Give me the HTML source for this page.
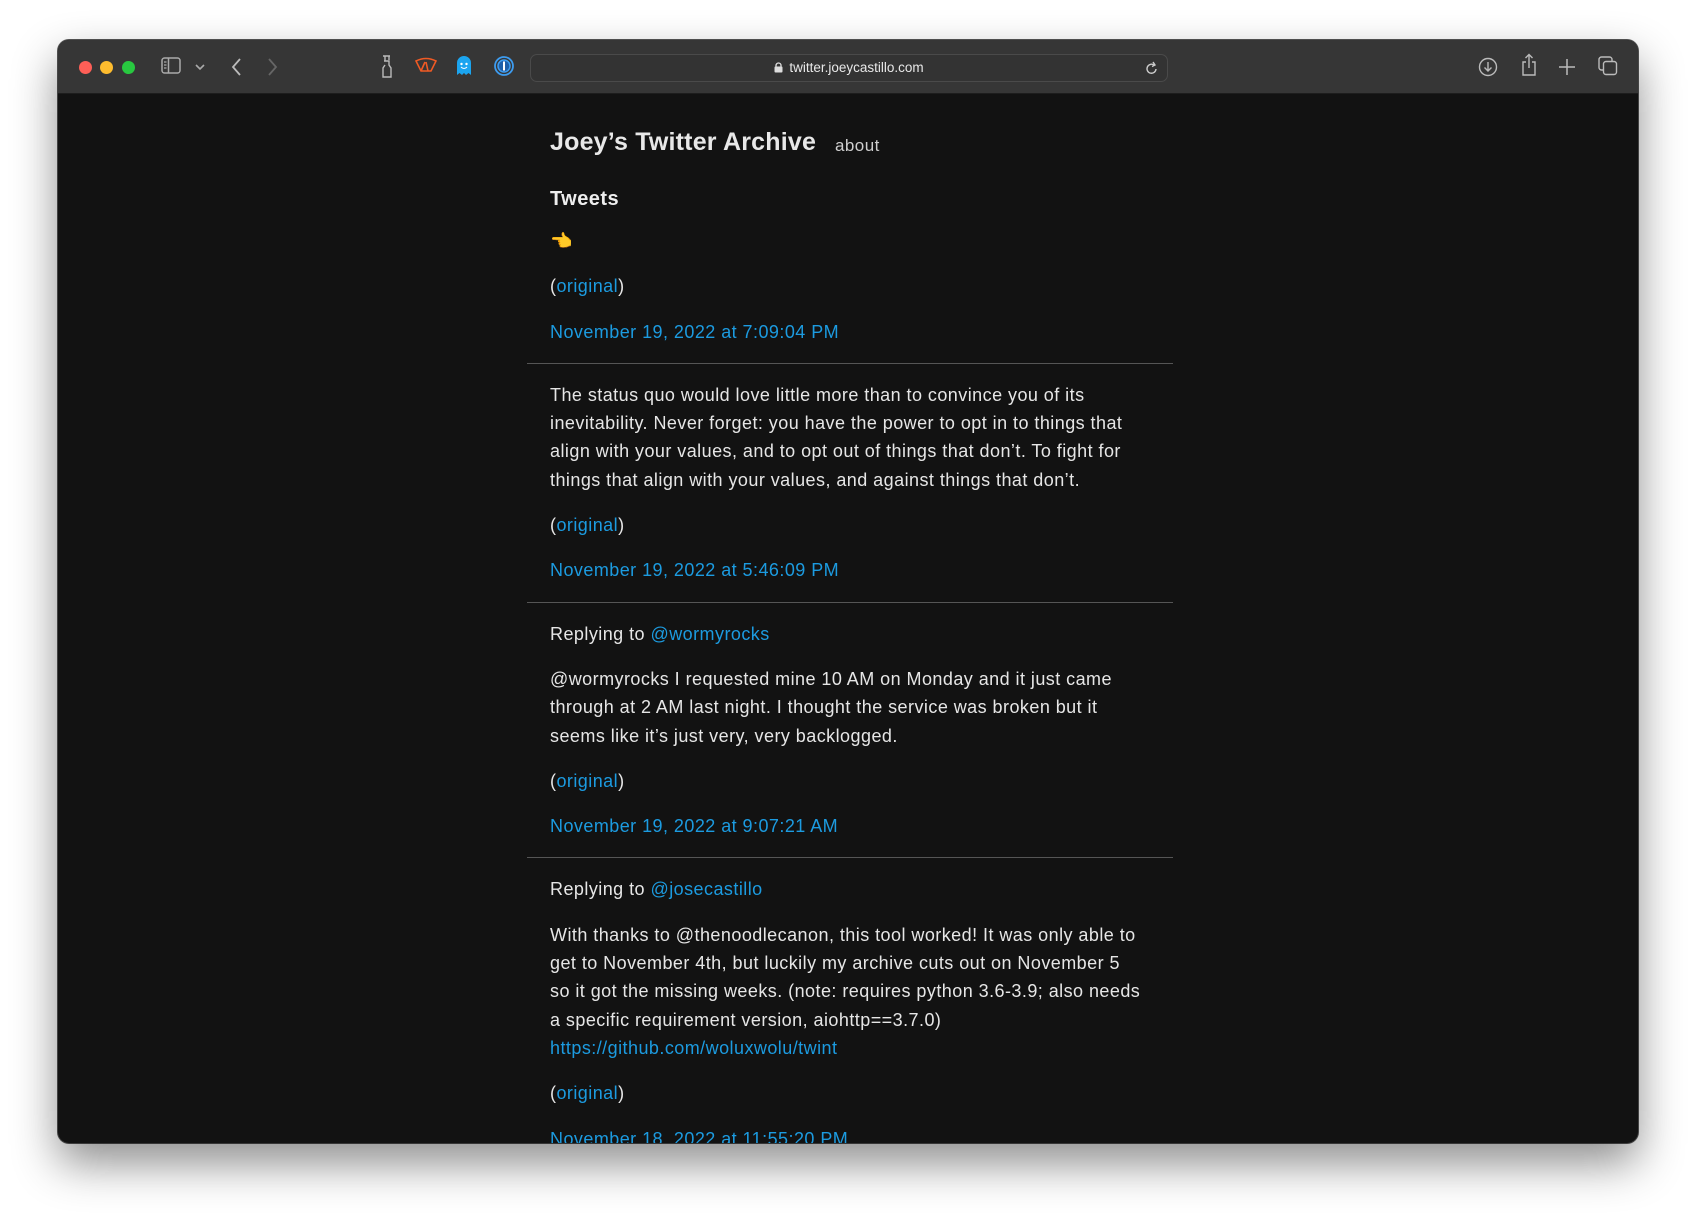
<!DOCTYPE html>
<html><head><meta charset="utf-8"><style>
*{box-sizing:border-box;margin:0;padding:0}
html,body{width:1697px;height:1222px;background:#fff;overflow:hidden;font-family:"Liberation Sans","DejaVu Sans",sans-serif}
.win{position:absolute;left:58px;top:40px;width:1580px;height:1103px;border-radius:11px;background:#121212;overflow:hidden;box-shadow:0 20px 45px rgba(0,0,0,.45),0 0 0 1px #555}
.bar{position:absolute;left:0;top:0;width:100%;height:54px;background:#363636;border-bottom:1px solid #1d1d1d}
.dot{position:absolute;top:21px;width:13px;height:13px;border-radius:50%}
.ic{position:absolute}
.url{position:absolute;left:472px;top:14px;width:638px;height:28px;border-radius:7px;border:1px solid #4a4a4a;background:#333;color:#e8e8e8;font-size:13.5px;text-align:center;line-height:26px}
.content{position:absolute;left:469px;top:54px;width:646px;color:#e6e6e6;font-size:18px;letter-spacing:0.45px}
.hd{padding:0 23px;height:79px;position:relative}
.hd h1{position:absolute;left:23px;top:34px;font-size:25px;font-weight:bold;color:#e8e8e8;letter-spacing:0.2px}
.hd span{position:absolute;left:308px;top:42px;font-size:17px;color:#cfcfcf}
h2{font-size:20px;font-weight:bold;padding:0 23px;line-height:28px;color:#eee}
.art{padding:0 23px;border-bottom:1px solid #555}
.art p{line-height:28.3px;margin:17px 0}
a{color:#1c9be0;text-decoration:none}
</style></head><body>
<div class="win">
 <div class="bar">
  <div class="dot" style="left:21px;background:#fe5f57"></div>
  <div class="dot" style="left:42px;background:#febc2e"></div>
  <div class="dot" style="left:64px;background:#28c840"></div>
  <svg class="ic" style="left:103px;top:17px" width="20" height="18" viewBox="0 0 20 18"><rect x="1" y="1" width="18" height="15" rx="2.5" fill="none" stroke="#aaa" stroke-width="1.5"/><line x1="7.5" y1="1" x2="7.5" y2="16" stroke="#aaa" stroke-width="1.5"/><path d="M3 5h2.5M3 8h2.5M3 11h2.5" stroke="#aaa" stroke-width="1.2"/></svg>
  <svg class="ic" style="left:137px;top:23px" width="10" height="8"><path d="M1 2l4 4 4-4" fill="none" stroke="#aaa" stroke-width="1.6"/></svg>
  <svg class="ic" style="left:172px;top:17px" width="12" height="20"><path d="M10 2L3 10l7 8" fill="none" stroke="#bbb" stroke-width="1.8"/></svg>
  <svg class="ic" style="left:209px;top:17px" width="12" height="20"><path d="M2 2l7 8-7 8" fill="none" stroke="#666" stroke-width="1.8"/></svg>
  <svg class="ic" style="left:322px;top:14px" width="14" height="24"><path d="M3 2h7M5 2v5M9 2v4M4 7h5v4l2 3v9H3v-9l2-3" fill="none" stroke="#bbb" stroke-width="1.4"/></svg>
  <svg class="ic" style="left:357px;top:17px" width="22" height="18"><path d="M1 4q10-5 20 0l-5 10H6z M6 14l4-9M13 14l-2-9" fill="none" stroke="#f05a24" stroke-width="1.6"/></svg>
  <svg class="ic" style="left:398px;top:15px" width="16" height="22"><path d="M1 20V8a7 7 0 0 1 14 0v12l-2.5-2-2.5 2-2-2-2 2-2.5-2z" fill="#1ba5f0"/><circle cx="5.5" cy="9" r="1.2" fill="#fff"/><circle cx="10.5" cy="9" r="1.2" fill="#fff"/><path d="M5 12q3 3 6 0" stroke="#fff" fill="none"/></svg>
  <svg class="ic" style="left:436px;top:16px" width="20" height="20"><circle cx="10" cy="10" r="9" fill="none" stroke="#3d9cf0" stroke-width="1.8"/><circle cx="10" cy="10" r="6" fill="#1e5ea8" stroke="#3d9cf0" stroke-width="1.5"/><rect x="9" y="5.5" width="2" height="9" fill="#fff"/></svg>
  <div class="url"><svg width="9" height="11" style="vertical-align:-1px;margin-right:6px"><rect x="0.5" y="4.5" width="8" height="6" rx="1" fill="#ddd"/><path d="M2 5V3.5a2.5 2.5 0 0 1 5 0V5" fill="none" stroke="#ddd" stroke-width="1.3"/></svg>twitter.joeycastillo.com
   <svg style="position:absolute;right:8px;top:6px" width="14" height="16"><path d="M11 8a4.5 4.5 0 1 1-2-4" fill="none" stroke="#ccc" stroke-width="1.4"/><path d="M8 1l2 3-3 1.5" fill="none" stroke="#ccc" stroke-width="1.4"/></svg></div>
  <svg class="ic" style="left:1420px;top:17px" width="20" height="20"><circle cx="10" cy="10" r="8.5" fill="none" stroke="#bbb" stroke-width="1.4"/><path d="M10 5v9M6.5 10.5L10 14l3.5-3.5" fill="none" stroke="#bbb" stroke-width="1.4"/></svg>
  <svg class="ic" style="left:1462px;top:13px" width="18" height="24"><path d="M6 9H3v13h12V9h-3M9 15V2M5.5 5L9 1.5 12.5 5" fill="none" stroke="#bbb" stroke-width="1.4"/></svg>
  <svg class="ic" style="left:1500px;top:18px" width="18" height="18"><path d="M9 1v16M1 9h16" stroke="#bbb" stroke-width="1.5"/></svg>
  <svg class="ic" style="left:1540px;top:16px" width="20" height="20"><rect x="1" y="1" width="13" height="13" rx="2.5" fill="none" stroke="#bbb" stroke-width="1.4"/><rect x="5.5" y="5.5" width="13" height="13" rx="2.5" fill="#363636" stroke="#bbb" stroke-width="1.4"/></svg>
 </div>
 <div class="content">
  <div class="hd"><h1>Joey’s Twitter Archive</h1><span>about</span></div>
  <h2 style="margin-top:12px">Tweets</h2>
  <div class="art"><p style="margin-top:14px">👈</p><p>(<a>original</a>)</p><p><a>November 19, 2022 at 7:09:04 PM</a></p></div>
  <div class="art"><p>The status quo would love little more than to convince you of its inevitability. Never forget: you have the power to opt in to things that align with your values, and to opt out of things that don’t. To fight for things that align with your values, and against things that don’t.</p><p>(<a>original</a>)</p><p><a>November 19, 2022 at 5:46:09 PM</a></p></div>
  <div class="art"><p>Replying to <a>@wormyrocks</a></p><p>@wormyrocks I requested mine 10 AM on Monday and it just came through at 2 AM last night. I thought the service was broken but it seems like it’s just very, very backlogged.</p><p>(<a>original</a>)</p><p><a>November 19, 2022 at 9:07:21 AM</a></p></div>
  <div class="art" style="border:0"><p>Replying to <a>@josecastillo</a></p><p style="white-space:nowrap">With thanks to @thenoodlecanon, this tool worked! It was only able to<br>get to November 4th, but luckily my archive cuts out on November 5<br>so it got the missing weeks. (note: requires python 3.6-3.9; also needs<br>a specific requirement version, aiohttp==3.7.0)<br><a>https://github.com/woluxwolu/twint</a></p><p>(<a>original</a>)</p><p><a>November 18, 2022 at 11:55:20 PM</a></p></div>
 </div>
</div>
</body></html>
